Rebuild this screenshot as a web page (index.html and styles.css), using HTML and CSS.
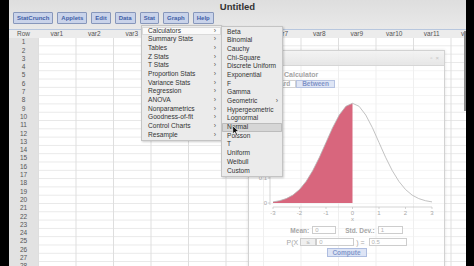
FILE: index.html
```html
<!DOCTYPE html>
<html lang="en">
<head>
    <meta charset="UTF-8">
    <title>Untitled - StatCrunch</title>
    <link rel="stylesheet" href="styles.css">
</head>
<body>
    <div class="app">
        <header class="topbar">
            <div class="title">Untitled</div>
            <nav class="toolbar">
                <span class="tb">StatCrunch</span>
                <span class="tb">Applets</span>
                <span class="tb">Edit</span>
                <span class="tb">Data</span>
                <span class="tb">Stat</span>
                <span class="tb">Graph</span>
                <span class="tb">Help</span>
            </nav>
        </header>

        <div class="sheet">
            <div class="sheet-head">
                <div class="rowhead">Row</div>
                <div class="colhead">var1</div>
                <div class="colhead">var2</div>
                <div class="colhead">var3</div>
                <div class="colhead">var4</div>
                <div class="colhead">var5</div>
                <div class="colhead">var6</div>
                <div class="colhead">var7</div>
                <div class="colhead">var8</div>
                <div class="colhead">var9</div>
                <div class="colhead">var10</div>
                <div class="colhead">var11</div>
                <div class="colhead">var12</div>
            </div>
            <div class="sheet-body">
                <div class="rownums">
                    <div>1</div><div>2</div><div>3</div><div>4</div><div>5</div><div>6</div><div>7</div>
                    <div>8</div><div>9</div><div>10</div><div>11</div><div>12</div><div>13</div><div>14</div>
                    <div>15</div><div>16</div><div>17</div><div>18</div><div>19</div><div>20</div><div>21</div>
                    <div>22</div><div>23</div><div>24</div><div>25</div><div>26</div><div>27</div><div>28</div>
                </div>
                <div class="cells"></div>
            </div>
        </div>

        <!-- calculator window, faded while the menu is open -->
        <div class="dialog">
            <div class="dialog-bar">
                <span class="ctl">&#9643;</span>
                <span class="ctl">&times;</span>
            </div>
            <div class="dialog-body">
                <div class="calc-title">Normal Calculator</div>
                <div class="tabs">
                    <span class="tab">Standard</span>
                    <span class="tab active">Between</span>
                </div>
                <svg class="plot" width="185" height="130" viewBox="0 0 185 130">
                    <path class="area" d="M18 111 L18 109.9 L24.6 108.7 L31.25 106.6 L37.9 103.1 L44.5 97.5 L51.1 89.4 L57.75 78.6 L64.4 65.3 L71 50.5 L77.6 35.7 L84.25 23 L90.9 14.3 L97.5 11.3 L97.5 111 Z"/>
                    <path class="curve" d="M18 109.9 L24.6 108.7 L31.25 106.6 L37.9 103.1 L44.5 97.5 L51.1 89.4 L57.75 78.6 L64.4 65.3 L71 50.5 L77.6 35.7 L84.25 23 L90.9 14.3 L97.5 11.3 L104.1 14.3 L110.75 23 L117.4 35.7 L124 50.5 L130.6 65.3 L137.25 78.6 L143.9 89.4 L150.5 97.5 L157.1 103.1 L163.75 106.6 L170.4 108.7 L177 109.9"/>
                    <path class="axis" d="M15 8 V113 M13 111 H15 M13 86 H15 M13 61 H15 M13 36 H15 M13 11 H15"/>
                    <path class="axis" d="M18 115 H177 M18 115 V117 M44.5 115 V117 M71 115 V117 M97.5 115 V117 M124 115 V117 M150.5 115 V117 M177 115 V117"/>
                    <g class="lbl" text-anchor="end">
                        <text x="12" y="113">0</text>
                        <text x="12" y="88">0.1</text>
                        <text x="12" y="63">0.2</text>
                        <text x="12" y="38">0.3</text>
                    </g>
                    <g class="lbl" text-anchor="middle">
                        <text x="18" y="123">-3</text>
                        <text x="44.5" y="123">-2</text>
                        <text x="71" y="123">-1</text>
                        <text x="97.5" y="123">0</text>
                        <text x="124" y="123">1</text>
                        <text x="150.5" y="123">2</text>
                        <text x="177" y="123">3</text>
                        <text x="97.5" y="129">x</text>
                    </g>
                </svg>
                <div class="calc-row">
                    <span class="lab">Mean:</span>
                    <span class="field w24">0</span>
                    <span class="lab gap">Std. Dev.:</span>
                    <span class="field w25">1</span>
                </div>
                <div class="calc-row">
                    <span class="plain">P(X</span>
                    <span class="field sel">&le;</span>
                    <span class="field w38">0</span>
                    <span class="plain paren">) =</span>
                    <span class="field w38">0.5</span>
                </div>
                <div class="calc-row">
                    <span class="compute">Compute</span>
                </div>
            </div>
        </div>

        <ul class="menu stat-menu">
            <li class="open"><span>Calculators</span><i>&rsaquo;</i></li>
            <li><span>Summary Stats</span><i>&rsaquo;</i></li>
            <li><span>Tables</span><i>&rsaquo;</i></li>
            <li><span>Z Stats</span><i>&rsaquo;</i></li>
            <li><span>T Stats</span><i>&rsaquo;</i></li>
            <li><span>Proportion Stats</span><i>&rsaquo;</i></li>
            <li><span>Variance Stats</span><i>&rsaquo;</i></li>
            <li><span>Regression</span><i>&rsaquo;</i></li>
            <li><span>ANOVA</span><i>&rsaquo;</i></li>
            <li><span>Nonparametrics</span><i>&rsaquo;</i></li>
            <li><span>Goodness-of-fit</span><i>&rsaquo;</i></li>
            <li><span>Control Charts</span><i>&rsaquo;</i></li>
            <li><span>Resample</span><i>&rsaquo;</i></li>
        </ul>

        <ul class="menu sub-menu">
            <li>Beta</li>
            <li>Binomial</li>
            <li>Cauchy</li>
            <li>Chi-Square</li>
            <li>Discrete Uniform</li>
            <li>Exponential</li>
            <li>F</li>
            <li>Gamma</li>
            <li><span>Geometric</span><i>&rsaquo;</i></li>
            <li>Hypergeometric</li>
            <li>Lognormal</li>
            <li class="hl">Normal</li>
            <li>Poisson</li>
            <li>T</li>
            <li>Uniform</li>
            <li>Weibull</li>
            <li>Custom</li>
        </ul>

        <svg class="cursor" width="8" height="12" viewBox="0 0 8 12">
            <path d="M0.7 0.7 L0.7 9 L2.7 7 L4.2 10.4 L5.6 9.8 L4.1 6.5 L6.9 6.5 Z"/>
        </svg>
        <div class="scroll-thumb"></div>
    </div>
</body>
</html>
```

FILE: styles.css
```css
body {
    margin: 0;
    background: #000;
    width: 474px;
    height: 266px;
    overflow: hidden;
    font-family: 'Liberation Sans', Arial, sans-serif;
}

.app {
    position: relative;
    margin-left: 9px;
    width: 457px;
    height: 266px;
    background: #fff;
    overflow: hidden;
}

/* top bar */
.topbar {
    height: 29px;
    background: linear-gradient(#dedede, #e9e9e9);
    border-bottom: 1px solid #b8c7de;
}

.title {
    text-align: center;
    font-weight: bold;
    font-size: 9.5px;
    line-height: 11px;
    padding-top: 1px;
    color: #333;
}

.toolbar {
    display: flex;
    gap: 4px;
    padding-left: 4px;
}

.tb {
    box-sizing: border-box;
    height: 12px;
    padding: 0 3px;
    border: 1px solid #8797bb;
    border-radius: 1px;
    background: #c9d3ea;
    color: #3f5ea6;
    font-weight: bold;
    font-size: 6px;
    line-height: 10px;
}

/* spreadsheet */
.sheet-head {
    display: flex;
    height: 8.3px;
    background: #ececec;
    color: #555;
    font-size: 6.5px;
    line-height: 8.3px;
    white-space: nowrap;
}

.rowhead {
    width: 29px;
    flex-shrink: 0;
    text-align: center;
}

.colhead {
    width: 37.5px;
    flex-shrink: 0;
    text-align: center;
}

.sheet-body {
    display: flex;
}

.rownums {
    width: 29px;
    flex-shrink: 0;
    background: #e2e2e2;
    color: #555;
    font-size: 6.5px;
}

.rownums div {
    height: 8.3px;
    line-height: 8.3px;
    text-align: center;
}

.cells {
    flex: 1;
    background-image:
        linear-gradient(to right, #dedede 0, #dedede 1px, transparent 1px),
        linear-gradient(to bottom, transparent 0, transparent 7.3px, #e8e8e8 7.3px);
    background-size: 37.5px 100%, 100% 8.3px;
}

/* calculator dialog */
.dialog {
    position: absolute;
    left: 239px;
    top: 50px;
    width: 195px;
    height: 230px;
    border: 1px solid #d2d2d2;
    background: rgba(255, 255, 255, 0.5);
    box-shadow: 0 0 3px rgba(0, 0, 0, 0.12);
}

.dialog-bar {
    height: 14px;
    display: flex;
    justify-content: flex-end;
    align-items: center;
    gap: 3px;
    padding-right: 5px;
    background: linear-gradient(rgba(242, 242, 242, 0.9), rgba(228, 228, 228, 0.9));
    border-bottom: 1px solid #d6d6d6;
}

.ctl {
    color: #c4c4c4;
    font-size: 6px;
    line-height: 6px;
}

.dialog-body {
    padding: 4px 6px 0;
}

.calc-title {
    margin-left: 3px;
    font-weight: bold;
    font-size: 7px;
    line-height: 9px;
    color: #a3a3a3;
}

.tabs {
    display: flex;
    margin: 1px 0 0 1px;
}

.tab {
    box-sizing: border-box;
    height: 8px;
    padding: 0 5px;
    border: 1px solid #d2d2d2;
    background: rgba(255, 255, 255, 0.7);
    color: #a6a6a6;
    font-weight: bold;
    font-size: 6.5px;
    line-height: 6px;
}

.tab.active {
    background: #dfe6f5;
    border-color: #b6c3e2;
    color: #7f93c8;
}

.plot {
    display: block;
    margin-top: 4px;
}

.plot .area {
    fill: #d8667d;
}

.plot .curve {
    fill: none;
    stroke: #b2b2b2;
    stroke-width: 0.8;
}

.plot .axis {
    fill: none;
    stroke: #b8b8b8;
    stroke-width: 0.6;
}

.plot .lbl {
    fill: #a8a8a8;
    font-size: 6px;
    font-family: 'Liberation Sans', Arial, sans-serif;
}

.calc-row {
    display: flex;
    justify-content: center;
    align-items: center;
    margin-top: 4px;
    height: 8px;
    color: #a6a6a6;
}

.calc-row:last-child {
    margin-top: 2px;
    height: 9px;
}

.lab {
    font-weight: bold;
    font-size: 6.5px;
    margin-right: 3px;
}

.lab.gap {
    margin-left: 9px;
}

.plain {
    font-size: 7px;
    margin-right: 2px;
}

.plain.paren {
    margin: 0 4px 0 2px;
}

.field {
    box-sizing: border-box;
    height: 8px;
    border: 1px solid #cdcdcd;
    background: rgba(255, 255, 255, 0.8);
    color: #b3b3b3;
    font-size: 6px;
    line-height: 6px;
    padding-left: 2px;
}

.w24 { width: 24px; }
.w25 { width: 25px; }
.w38 { width: 38px; }

.field.sel {
    width: 16px;
    padding: 0;
    text-align: center;
    background: #f0f0f0;
}

.compute {
    box-sizing: border-box;
    width: 40px;
    height: 9px;
    border: 1px solid #aebde0;
    background: #dde4f5;
    color: #8499cc;
    font-weight: bold;
    font-size: 6.5px;
    line-height: 7px;
    text-align: center;
}

/* menus */
.menu {
    position: absolute;
    margin: 0;
    padding: 0.5px 0;
    list-style: none;
    box-sizing: border-box;
    background: #ebebeb;
    border: 1px solid #c4c4c4;
    box-shadow: 1px 1px 2px rgba(0, 0, 0, 0.2);
    color: #333;
    font-size: 6.6px;
}

.menu li {
    display: flex;
    justify-content: space-between;
    height: 8.7px;
    line-height: 8.7px;
    padding: 0 5px 0 6px;
    white-space: nowrap;
}

.menu i {
    font-style: normal;
    font-size: 7px;
    color: #555;
}

.stat-menu {
    left: 132px;
    top: 25px;
    width: 81px;
}

.sub-menu {
    left: 212px;
    top: 26px;
    width: 62px;
}

.sub-menu li {
    padding: 0 4px 0 5px;
}

.menu li.open {
    background: #fafafa;
    box-shadow: inset 0 0 0 1px #dadada;
}

.menu li.hl {
    background: #d6d6d6;
    box-shadow: inset 0 0 0 1px #bcbcbc;
    border-radius: 1px;
}

.cursor {
    position: absolute;
    left: 223px;
    top: 125px;
}

.cursor path {
    fill: #111;
    stroke: #fff;
    stroke-width: 0.7;
}

.scroll-thumb {
    position: absolute;
    right: 0;
    top: 31px;
    width: 2px;
    height: 80px;
    background: #8c8c8c;
}
```
